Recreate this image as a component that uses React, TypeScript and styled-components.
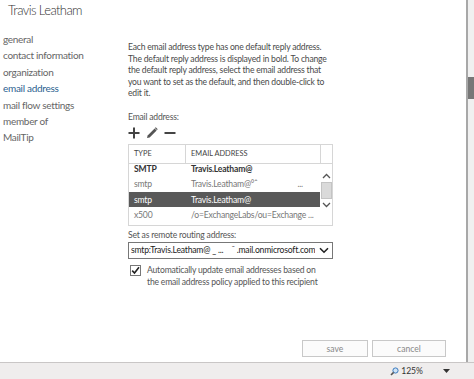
import React from 'react';
import styled, { createGlobalStyle } from 'styled-components';

const GlobalStyle = createGlobalStyle`
  html, body {
    margin: 0;
    padding: 0;
    background: #ffffff;
  }
  body {
    font-family: Lato, 'Open Sans', 'Liberation Sans', sans-serif;
    color: #444444;
  }
`;

const NAV_ITEMS = [
  'general',
  'contact information',
  'organization',
  'email address',
  'mail flow settings',
  'member of',
  'MailTip',
];

type Row = { type: string; address: string; primary?: boolean; selected?: boolean };

const ROWS: Row[] = [
  { type: 'SMTP', address: 'Travis.Leatham@', primary: true },
  { type: 'smtp', address: 'Travis.Leatham@\u00b0\u02c6                    ...' },
  { type: 'smtp', address: 'Travis.Leatham@', selected: true },
  { type: 'x500', address: '/o=ExchangeLabs/ou=Exchange ...' },
];

const App = () => (
  <>
    <GlobalStyle />
    <Frame>
      <Main>
        <Dialog>
          <Title>Travis Leatham</Title>
          <Body>
            <Nav>
              {NAV_ITEMS.map((item) => (
                <NavItem key={item} active={item === 'email address'}>
                  {item}
                </NavItem>
              ))}
            </Nav>
            <Content>
              <Intro>
                Each email address type has one default reply address. The default reply address is
                displayed in bold. To change the default reply address, select the email address
                that you want to set as the default, and then double-click to edit it.
              </Intro>
              <Label>Email address:</Label>
              <Toolbar>
                <ToolButton aria-label="add">
                  <svg width="12" height="12" viewBox="0 0 12 12">
                    <path d="M6 0.5v11M0.5 6h11" stroke="#444" strokeWidth="2" />
                  </svg>
                </ToolButton>
                <ToolButton aria-label="edit">
                  <svg width="12" height="12" viewBox="0 0 12 12">
                    <path d="M1 11l0.6-2.6L8.6 1.4l2 2-7 7z" fill="#555" />
                    <path d="M9.3 0.7l2 2" stroke="#555" strokeWidth="1.2" />
                  </svg>
                </ToolButton>
                <ToolButton aria-label="remove">
                  <svg width="12" height="12" viewBox="0 0 12 12">
                    <path d="M0.5 6h11" stroke="#444" strokeWidth="2" />
                  </svg>
                </ToolButton>
              </Toolbar>
              <Table>
                <HeaderRow>
                  <TypeCell head>TYPE</TypeCell>
                  <AddressCell head>EMAIL ADDRESS</AddressCell>
                  <HeadSpacer />
                </HeaderRow>
                <TableBody>
                  <Rows>
                    {ROWS.map((row, i) => (
                      <DataRow key={i} selected={row.selected} primary={row.primary}>
                        <TypeCell>{row.type}</TypeCell>
                        <AddressCell>{row.address}</AddressCell>
                      </DataRow>
                    ))}
                  </Rows>
                  <ScrollBar>
                    <Arrow>
                      <svg width="9" height="6" viewBox="0 0 9 6">
                        <path d="M1 5l3.5-3.5L8 5" fill="none" stroke="#555" strokeWidth="1.3" />
                      </svg>
                    </Arrow>
                    <Thumb />
                    <Arrow>
                      <svg width="9" height="6" viewBox="0 0 9 6">
                        <path d="M1 1l3.5 3.5L8 1" fill="none" stroke="#555" strokeWidth="1.3" />
                      </svg>
                    </Arrow>
                  </ScrollBar>
                </TableBody>
              </Table>
              <Label>Set as remote routing address:</Label>
              <Select>
                <SelectText>smtp:Travis.Leatham@ _ ...    &#732; .mail.onmicrosoft.com</SelectText>
                <svg width="10" height="7" viewBox="0 0 10 7">
                  <path d="M1 1.2l4 4 4-4" fill="none" stroke="#222" strokeWidth="1.6" />
                </svg>
              </Select>
              <CheckRow>
                <CheckBox>
                  <svg width="9" height="9" viewBox="0 0 9 9">
                    <path d="M1.2 4.6l2.3 2.4L8 1.2" fill="none" stroke="#222" strokeWidth="1.6" />
                  </svg>
                </CheckBox>
                <CheckText>
                  Automatically update email addresses based on the email address policy applied to
                  this recipient
                </CheckText>
              </CheckRow>
            </Content>
          </Body>
          <Footer>
            <Button>save</Button>
            <Button wide>cancel</Button>
          </Footer>
        </Dialog>
        <Rail>
          <RailThumb />
        </Rail>
      </Main>
      <StatusBar>
        <Zoom>
          <svg width="9" height="9" viewBox="0 0 9 9">
            <circle cx="5.5" cy="3.5" r="2.6" fill="#cfe3f5" stroke="#3b7bbf" strokeWidth="1" />
            <path d="M3.6 5.4L1 8" stroke="#555" strokeWidth="1.6" />
          </svg>
          125%
        </Zoom>
        <svg width="7" height="4" viewBox="0 0 7 4">
          <path d="M0 0h7L3.5 4z" fill="#333" />
        </svg>
      </StatusBar>
    </Frame>
  </>
);

const Frame = styled.div`
  width: 474px;
  height: 379px;
  display: flex;
  flex-direction: column;
  overflow: hidden;
`;

const Main = styled.div`
  flex: 1;
  display: flex;
  min-height: 0;
`;

const Dialog = styled.div`
  flex: 1;
  display: flex;
  flex-direction: column;
`;

const Title = styled.div`
  padding: 0 8px;
  height: 22px;
  line-height: 20px;
  font-size: 13px;
  letter-spacing: -0.6px;
  font-weight: 300;
  color: #333333;
`;

const Body = styled.div`
  flex: 1;
  display: flex;
`;

const Nav = styled.div`
  width: 125px;
  padding: 9px 0 0 3px;
  display: flex;
  flex-direction: column;
`;

const NavItem = styled.div<{ active?: boolean }>`
  font-size: 10px;
  letter-spacing: -0.3px;
  line-height: 16.4px;
  color: ${({ active }) => (active ? '#2b5f8f' : '#666666')};
  white-space: nowrap;
`;

const Content = styled.div`
  width: 205px;
  padding-top: 20px;
  display: flex;
  flex-direction: column;
  letter-spacing: -0.2px;
`;

const Intro = styled.div`
  font-size: 8.6px;
  line-height: 11.6px;
  color: #4a4a4a;
  margin-bottom: 11px;
`;

const Label = styled.div`
  font-size: 8.6px;
  line-height: 12px;
  color: #555555;
`;

const Toolbar = styled.div`
  display: flex;
  gap: 6px;
  margin: 4px 0 5px 0;
`;

const ToolButton = styled.span`
  width: 12px;
  height: 12px;
  display: flex;
`;

const Table = styled.div`
  border: 1px solid #d6d6d6;
  height: 80px;
  display: flex;
  flex-direction: column;
  margin-bottom: 3px;
`;

const HeaderRow = styled.div`
  display: flex;
  height: 18px;
  border-bottom: 1px solid #d6d6d6;
  letter-spacing: 0;
`;

const HeadSpacer = styled.div`
  width: 11px;
  border-left: 1px solid #d6d6d6;
`;

const TableBody = styled.div`
  flex: 1;
  display: flex;
  overflow: hidden;
`;

const Rows = styled.div`
  flex: 1;
  margin-top: -3px;
`;

const DataRow = styled.div<{ selected?: boolean; primary?: boolean }>`
  display: flex;
  height: 15.5px;
  align-items: center;
  background: ${({ selected }) => (selected ? '#595959' : 'transparent')};
  color: ${({ selected, primary }) => (selected ? '#ffffff' : primary ? '#333333' : '#777777')};
  font-weight: ${({ primary }) => (primary ? 700 : 400)};
`;

const TypeCell = styled.div<{ head?: boolean }>`
  width: 57px;
  padding-left: 5px;
  box-sizing: border-box;
  font-size: ${({ head }) => (head ? '7.4px' : '8.6px')};
  display: flex;
  align-items: center;
  ${({ head }) => head && 'border-right: 1px solid #d6d6d6; color: #444;'}
`;

const AddressCell = styled.div<{ head?: boolean }>`
  flex: 1;
  min-width: 0;
  padding-left: 5px;
  font-size: ${({ head }) => (head ? '7.4px' : '8.6px')};
  white-space: pre;
  overflow: hidden;
  display: flex;
  align-items: center;
  ${({ head }) => head && 'color: #444;'}
`;

const ScrollBar = styled.div`
  width: 12px;
  display: flex;
  flex-direction: column;
  align-items: center;
  padding-top: 8px;
`;

const Arrow = styled.div`
  height: 8px;
  display: flex;
  align-items: center;
`;

const Thumb = styled.div`
  width: 11px;
  height: 17px;
  background: #dadada;
  border: 1px solid #c4c4c4;
  box-sizing: border-box;
  margin: 2px 0;
`;

const Select = styled.div`
  margin-top: 1px;
  height: 15px;
  border: 1px solid #777777;
  display: flex;
  align-items: center;
  justify-content: space-between;
  gap: 2px;
  padding: 0 3px 0 2px;
  font-size: 8.6px;
  color: #222222;
`;

const SelectText = styled.span`
  white-space: pre;
  overflow: hidden;
`;

const CheckRow = styled.div`
  display: flex;
  gap: 6px;
  margin-top: 5px;
  padding-left: 2px;
`;

const CheckBox = styled.div`
  width: 9px;
  height: 9px;
  border: 1px solid #777777;
  margin-top: 1px;
  flex-shrink: 0;
  display: flex;
`;

const CheckText = styled.div`
  max-width: 172px;
  font-size: 8.6px;
  line-height: 12px;
  color: #555555;
`;

const Footer = styled.div`
  display: flex;
  justify-content: flex-end;
  gap: 4px;
  padding: 0 20px 5px 0;
`;

const Button = styled.div<{ wide?: boolean }>`
  width: ${({ wide }) => (wide ? '72px' : '64px')};
  height: 15px;
  border: 1px solid #c8c8c8;
  background: #fbfbfb;
  color: #888888;
  font-size: 8.6px;
  display: flex;
  align-items: center;
  justify-content: center;
`;

const Rail = styled.div`
  width: 6px;
  border-left: 2px solid #a8a8a8;
  background: #f0f0f0;
  padding-top: 77px;
`;

const RailThumb = styled.div`
  height: 22px;
  background: #777777;
`;

const StatusBar = styled.div`
  height: 16px;
  border-top: 1px solid #c9c6c6;
  background: #efeded;
  display: flex;
  align-items: center;
  justify-content: flex-end;
  gap: 20px;
  padding-right: 24px;
`;

const Zoom = styled.div`
  display: flex;
  align-items: center;
  gap: 2px;
  font-size: 8.6px;
  color: #333333;
`;

export default App;
